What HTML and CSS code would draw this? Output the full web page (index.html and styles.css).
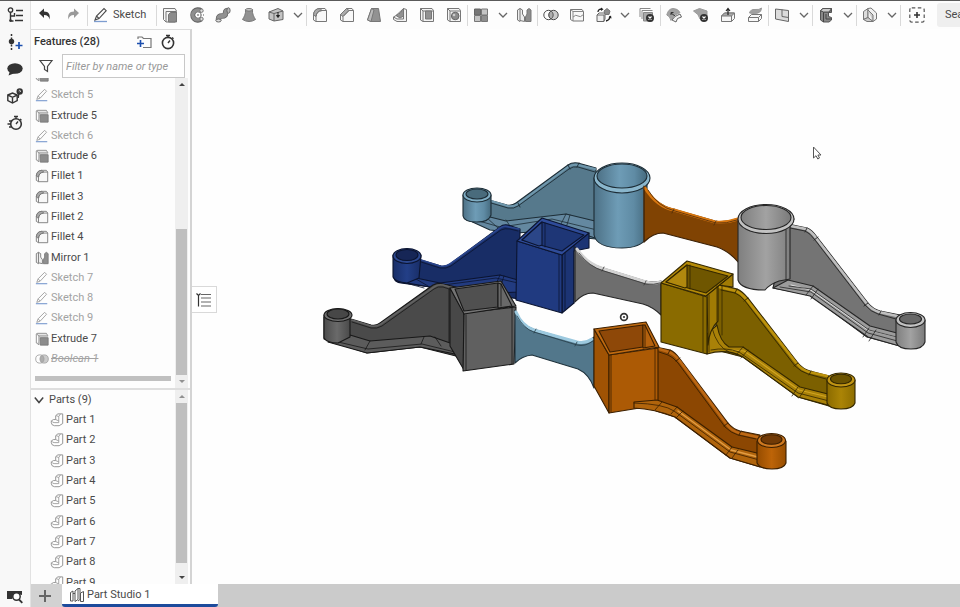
FILE: index.html
```html
<!DOCTYPE html>
<html lang="en">
<head>
<meta charset="utf-8">
<title>Part Studio 1</title>
<link rel="stylesheet" href="styles.css">
</head>
<body>
<svg class="defs" aria-hidden="true">
  <defs>
    <symbol id="i-sketch" viewBox="0 0 16 16"><path d="M1 14.500h13" stroke="#7d9dd0" stroke-width="1.300"/><path d="M2 13 3.500 9 11 1.500l2.200 2.200L6 11.500zM3.500 9 6 11.500" fill="none" stroke="currentColor" stroke-width="1.100"/></symbol>
    <symbol id="i-extrude" viewBox="0 0 16 16"><path d="M1.500 12.500V2.500l1-1H13L14.500 4v1M1.500 12.500 4.500 14.500V4.500L1.500 2M4.500 4.500h10" fill="#e6e6e6" stroke="#888"/><path d="M6 6.500h9v8.500H6z" fill="#8c8c8c" stroke="#777"/></symbol>
    <symbol id="i-extrude-big" viewBox="0 0 16 16"><path d="M1.500 12.500V1.500h11.500L14.500 4M1.500 12.500 4 15V4.500h10.500v10.500H4" fill="#f4f4f4" stroke="#777"/><path d="M6.500 7.500 8.500 5.500h6V13L13 15H6.500z" fill="#8c8c8c" stroke="#777"/></symbol>
    <symbol id="i-fillet" viewBox="0 0 16 16"><path d="M1.500 13V7.500Q2 2 7.500 1.500H13l1.500 2v11H4z" fill="#f8f8f8" stroke="#777"/><path d="M1.500 8Q2 1.500 8 1.500l2 2Q4.500 4 4 9.500z" fill="#aaa" stroke="#777"/><path d="M4 14.500V9.500Q4.500 4 10 3.500h4.500" fill="none" stroke="#777"/></symbol>
    <symbol id="i-mirror" viewBox="0 0 16 16"><path d="M1.500 3 4 1.500 6.500 3v4L8.500 10v4.500L4 13.500v1L1.500 13z" fill="#eee" stroke="#777"/><path d="M4 1.500v12" fill="none" stroke="#777"/><path d="M9.500 10 11 7V3l2-1.500 2 1.500v11.500H9.500z" fill="#8e8e8e" stroke="#777"/></symbol>
    <symbol id="i-boolean" viewBox="0 0 16 16"><circle cx="5.500" cy="8" r="4.700" fill="none" stroke="currentColor"/><circle cx="10.500" cy="8" r="4.700" fill="#aaa9" stroke="currentColor"/><path d="M8 4a4.800 4.800 0 0 1 0 8 4.800 4.800 0 0 1 0-8" fill="#9999" stroke="currentColor" stroke-width=".6"/></symbol>
    <symbol id="i-part" viewBox="0 0 16 16"><path d="M6.500 7.500V3L9 1h5.500v11L10.500 14.500H5Q1.500 14 1.500 11V9L4 7.500z" fill="#fff" stroke="#888"/><path d="M1.500 9q1 2 4 2H10V4l2-3M10 4 7 3M6.500 7.500 10 9" fill="none" stroke="#999"/></symbol>
    <symbol id="i-chev" viewBox="0 0 10 10"><path d="m1 3 4 4 4-4" fill="none" stroke="#666" stroke-width="1.300"/></symbol>
    <symbol id="i-watch" viewBox="0 0 16 16"><circle cx="8" cy="9" r="5.600" fill="none" stroke="#333" stroke-width="1.600"/><path d="M6 1.500h4M8 1.500V4M12 3.500l1.500 1.300M8 9l2-2.500" fill="none" stroke="#333" stroke-width="1.400"/></symbol>
  </defs>
</svg>

<div class="app">
  <nav class="rail" aria-label="Tools">
    <button type="button" aria-label="Feature list"><svg viewBox="0 0 16 16"><circle cx="3.500" cy="3" r="2.200" fill="none" stroke="#333" stroke-width="1.300"/><path d="M3.500 5v9h3M3.500 9h4V6M9 3.500h7M9 8.500h7M8 13.500h8" fill="none" stroke="#333" stroke-width="1.400"/><circle cx="3.500" cy="13.500" r="1.300" fill="#333"/></svg></button>
    <button type="button" aria-label="Insert"><svg viewBox="0 0 16 16"><path d="M4.500 0v16" stroke="#333" stroke-width="1.500" stroke-dasharray="2 1.500"/><circle cx="4.500" cy="7.500" r="2.700" fill="#333"/><path d="M8.500 11.500h7M12 8v7" stroke="#1c4fae" stroke-width="1.700"/></svg></button>
    <button type="button" aria-label="Comments"><svg viewBox="0 0 16 16"><ellipse cx="8" cy="7.500" rx="7.700" ry="5.300" fill="#333"/><path d="m3 10-1.500 4.500L8 12z" fill="#333"/></svg></button>
    <button type="button" aria-label="Configurations"><svg viewBox="0 0 16 16"><path d="M.8 7 5.500 5l4.700 2v5.500L5.500 15 .8 12.500zM.8 7l4.700 2.300L10.200 7M5.500 9.300V15" fill="none" stroke="#333" stroke-width="1.400"/><circle cx="12.700" cy="3.500" r="3.200" fill="#333"/><path d="M11.700 3q1-1.500 2 0l-1 1.200" fill="none" stroke="#fff" stroke-width=".8"/><path d="m11.800 6-.5 4" stroke="#333" stroke-width="1.300"/></svg></button>
    <button type="button" aria-label="Versions"><svg viewBox="0 0 16 16"><circle cx="9" cy="9" r="5.300" fill="none" stroke="#333" stroke-width="1.600"/><path d="M7 1.500h4M9 1.500V4M13 4l1.500 1.200M9 9l2-2.500M2 6h3M.5 9h3.500M2 12h2.500" fill="none" stroke="#333" stroke-width="1.300"/></svg></button>
    <button type="button" class="rail-end" aria-label="Find tab"><svg viewBox="0 0 16 16"><path d="M0 3h15v4L8 5.500 5 11H0z" fill="#333"/><circle cx="9.500" cy="8.500" r="3.700" fill="#fff" stroke="#333" stroke-width="1.500"/><path d="m12 11.500 3.300 3.300" stroke="#333" stroke-width="1.800"/></svg></button>
  </nav>

  <div class="workspace">
    <header class="toolbar">
      <div class="group g-history">
        <button type="button" aria-label="Undo"><svg viewBox="0 0 16 16"><path d="m2 6 5-4.500v3C12 4.500 13.500 8 12.500 12.500 12 9.500 10.500 8 7 8v3z" fill="#333"/></svg></button>
        <button type="button" aria-label="Redo"><svg viewBox="0 0 16 16"><path d="m14 6-5-4.500v3C4 4.500 2.500 8 3.500 12.500 4 9.500 5.500 8 9 8v3z" fill="#999"/></svg></button>
      </div>
      <div class="group g-sketch">
        <button type="button" class="sketch"><svg viewBox="0 0 16 16"><use href="#i-sketch"/></svg>Sketch</button>
      </div>
      <div class="group g-solid">
        <button type="button" aria-label="Extrude"><svg viewBox="0 0 16 16"><use href="#i-extrude-big"/></svg></button>
        <button type="button" aria-label="Revolve"><svg viewBox="0 0 16 16"><path d="M12 3.800A5.200 5.200 0 1 0 12 12.200" fill="none" stroke="#666" stroke-width="5"/><path d="M11.500 4.200A4.800 4.800 0 1 0 11.500 11.800" fill="none" stroke="#8e8e8e" stroke-width="3.400"/><path d="M8 8h7M11 5l1 2m-1 4 1-2" stroke="#555" stroke-dasharray="2 1"/><circle cx="12.500" cy="3.700" r="1.700" fill="#ddd" stroke="#777"/><circle cx="12.500" cy="12" r="1.700" fill="#ddd" stroke="#777"/></svg></button>
        <button type="button" aria-label="Sweep"><svg viewBox="0 0 16 16"><path d="M3.500 13.500V12Q3.500 9 7 9q3.500 0 3.500-3 0-2.500 3-2.500" fill="none" stroke="#666" stroke-width="5.500"/><path d="M3.500 13V12Q3.500 9 7 9q3.500 0 3.500-3 0-2.500 2.500-2.500" fill="none" stroke="#929292" stroke-width="4"/><ellipse cx="13.500" cy="3.500" rx="1.600" ry="2.700" fill="#bbb" stroke="#666"/><ellipse cx="3.500" cy="13.500" rx="2.600" ry="1.500" fill="#ddd" stroke="#666"/></svg></button>
        <button type="button" aria-label="Loft"><svg viewBox="0 0 16 16"><path d="M4.500 2.500C5 7 3 10 1.500 12.500q6.500 4 13 0C13 10 11 7 11.500 2.500z" fill="#929292" stroke="#777"/><ellipse cx="8" cy="2.800" rx="3.500" ry="1.300" fill="#ccc" stroke="#777"/></svg></button>
        <button type="button" aria-label="Thicken"><svg viewBox="0 0 16 16"><path d="m1 5 9-3.500 5 2.500v8.500L6 14l-5-2z" fill="#c4c4c4" stroke="#666"/><path d="m1 5 5 1.500L15 4M6 6.500V14" fill="none" stroke="#666"/><path d="M10 5v5M8.500 8.500l1.500 2 1.500-2z" stroke="#222" fill="#222"/></svg></button>
        <button type="button" class="chev" aria-label="More solid tools"><svg viewBox="0 0 10 10"><use href="#i-chev"/></svg></button>
      </div>
      <div class="group g-modify">
        <button type="button" aria-label="Fillet"><svg viewBox="0 0 16 16"><use href="#i-fillet"/></svg></button>
        <button type="button" aria-label="Chamfer"><svg viewBox="0 0 16 16"><path d="M1.500 13V7.500l6-6H13l1.500 2v11H4z" fill="#f8f8f8" stroke="#777"/><path d="m1.500 7.500 6-6 2.500 2L4 9.500z" fill="#aaa" stroke="#777"/><path d="M4 14.500v-5l6-6h4.500" fill="none" stroke="#777"/></svg></button>
        <button type="button" aria-label="Draft"><svg viewBox="0 0 16 16"><path d="m1.500 13 4-11.500h7l2 13H5z" fill="#929292" stroke="#777"/><path d="m1.500 13 4-11.500L8 3 5 14.500z" fill="#bbb" stroke="#777"/></svg></button>
        <button type="button" aria-label="Rib"><svg viewBox="0 0 16 16"><path d="M1.500 10 4 8.500 11.500 1.500l3 1v12H5l-3.500-2z" fill="#f2f2f2" stroke="#777"/><path d="M4 8.500q5-1.500 7.500-7V9L8 11z" fill="#929292" stroke="#777"/><path d="M1.500 10 5 12h6.500V2" fill="none" stroke="#777"/></svg></button>
        <button type="button" aria-label="Shell"><svg viewBox="0 0 16 16"><path d="M1.500 13V1.500H13l1.500 2v11H4z" fill="#f4f4f4" stroke="#777"/><path d="M4 14.500V4L1.500 1.500M4 4h10.500" fill="none" stroke="#777"/><path d="M6.500 4h6v8h-6z" fill="#929292" stroke="#777"/></svg></button>
        <button type="button" aria-label="Hole"><svg viewBox="0 0 16 16"><path d="M1.500 13V1.500H13l1.500 2v11H4z" fill="#f4f4f4" stroke="#777"/><path d="M4 14.500V4L1.500 1.500M4 4h10.500" fill="none" stroke="#777"/><circle cx="9.200" cy="9" r="3.800" fill="#8c8c8c" stroke="#666"/><circle cx="8" cy="8" r="1.300" fill="#ccc"/></svg></button>
      </div>
      <div class="group g-pattern">
        <button type="button" aria-label="Pattern"><svg viewBox="0 0 16 16"><path d="M1.500 2h6v6h-6z" fill="#777" stroke="#666"/><path d="M8.500 2h6v6h-6zM1.500 8.500h6v6h-6z" fill="#c4c4c4" stroke="#777"/><path d="M8.500 8.500h6v6h-6z" fill="#8e8e8e" stroke="#777"/></svg></button>
        <button type="button" class="chev" aria-label="More patterns"><svg viewBox="0 0 10 10"><use href="#i-chev"/></svg></button>
        <button type="button" aria-label="Mirror"><svg viewBox="0 0 16 16"><use href="#i-mirror"/></svg></button>
      </div>
      <div class="group g-combine">
        <button type="button" aria-label="Boolean"><svg viewBox="0 0 16 16"><use href="#i-boolean"/></svg></button>
        <button type="button" aria-label="Split"><svg viewBox="0 0 16 16"><path d="M1.500 12.500V2.500h11.500l1.500 2v9.500H4z" fill="#f8f8f8" stroke="#777"/><path d="M1.500 2.500 4 4.500h10.500M4 4.500V14M4 10q3-3 5-1t5.500-1.500" fill="none" stroke="#888"/></svg></button>
        <button type="button" aria-label="Transform"><svg viewBox="0 0 16 16"><path d="M1 8h7v6.500H1z" fill="#eee" stroke="#666"/><path d="M1 8 3 6h6v6l-1 2" fill="none" stroke="#666"/><path d="m8 4 3-2.500L14 4l-1 3.500H9z" fill="#8c8c8c" stroke="#777"/><path d="M2 5q0-3 4-3M14 9q0 4-4 5" fill="none" stroke="#222" stroke-width="1.300"/><path d="m5 .5 2.500 1.800L5 4zM12.500 10.500l2.500-2 .5 3z" fill="#222"/></svg></button>
        <button type="button" class="chev" aria-label="More transforms"><svg viewBox="0 0 10 10"><use href="#i-chev"/></svg></button>
        <button type="button" aria-label="Delete part"><svg viewBox="0 0 16 16"><path d="M1 10V1.500h10.500M3 12V3.500h10.500" fill="none" stroke="#888"/><path d="M4.500 5.500h9V14h-9z" fill="#aaa" stroke="#888"/><circle cx="11" cy="11" r="4" fill="#333"/><path d="m9.500 9.500 3 3m0-3-3 3" stroke="#fff" stroke-width="1.100"/></svg></button>
      </div>
      <div class="group g-face">
        <button type="button" aria-label="Modify fillet"><svg viewBox="0 0 16 16"><path d="M.8 8Q2 2 7 1.500q5 0 7 4L9 8l-4 5.500Q4 9 .8 8" fill="#a2a2a2" stroke="#999"/><path d="M6 13q2-4 8-6l1.500 3-4 1.500L10 15z" fill="#f2f2f2" stroke="#666"/><path d="m9 9-4-3M5 8V5.500h2.500" fill="none" stroke="#333"/></svg></button>
        <button type="button" aria-label="Delete face"><svg viewBox="0 0 16 16"><path d="m.5 4 6-2.500L14 4v5l-7 3q-1-5-6.500-8" fill="#a2a2a2" stroke="#999"/><circle cx="11" cy="11" r="4" fill="#333"/><path d="m9.500 9.500 3 3m0-3-3 3" stroke="#fff" stroke-width="1.100"/></svg></button>
        <button type="button" aria-label="Move face"><svg viewBox="0 0 16 16"><path d="m1.500 9 3-3h10v5.500l-3 3h-10z" fill="#f6f6f6" stroke="#777"/><path d="m1.500 9 3-3h10l-3 3z" fill="#aaa" stroke="#777"/><path d="M11.500 9v5.500" stroke="#777"/><path d="M8 8V2M6 4l2-2.500L10 4" fill="none" stroke="#222" stroke-width="1.200"/></svg></button>
        <button type="button" aria-label="Replace face"><svg viewBox="0 0 16 16"><path d="m1.500 10.500 3-3h10v4l-3 3h-10z" fill="#f8f8f8" stroke="#777"/><path d="M2.500 6q1-4 5.500-3.500T14.500 1q0 4-3.500 5t-8.500 0" fill="#a2a2a2" stroke="#999"/><path d="M1.500 10.500h10l3-3M11.500 10.500v4" fill="none" stroke="#777"/></svg></button>
      </div>
      <div class="group g-one">
        <button type="button" aria-label="Plane"><svg viewBox="0 0 16 16"><path d="m1.500 2 13 1.500v11L1.500 12z" fill="#dcdcdc" stroke="#666"/><path d="M8 2.500v7l6.500 1" fill="none" stroke="#666"/></svg></button>
        <button type="button" class="chev" aria-label="More planes"><svg viewBox="0 0 10 10"><use href="#i-chev"/></svg></button>
      </div>
      <div class="group g-one">
        <button type="button" aria-label="Frame"><svg viewBox="0 0 16 16"><path d="M2.500 3.500 5 1.500h8.500v4h-3v4l3 1v2.500L11 15H5.500l-3-2z" fill="#888" stroke="#555"/><path d="M2.500 3.500 5.500 5H11l2.500-2M5.500 5v10M8 7v5h5.500" fill="none" stroke="#444"/><path d="m2.500 3.500 2.500-2h8.500L11 5H5.500z" fill="#ccc" stroke="#555"/></svg></button>
        <button type="button" class="chev" aria-label="More frames"><svg viewBox="0 0 10 10"><use href="#i-chev"/></svg></button>
      </div>
      <div class="group g-one">
        <button type="button" aria-label="Sheet metal"><svg viewBox="0 0 16 16"><path d="M1.500 4.500 6 1.500v9l-4.500 2z" fill="#ddd" stroke="#777"/><path d="m6 1.500 3-.5 5.500 5v6L11 14.500 6 10.500z" fill="#f0f0f0" stroke="#777"/><path d="M1.500 12.500 6 10.500l5 4H5zM11 14.500V8L6 3" fill="#ccc" stroke="#777"/></svg></button>
        <button type="button" class="chev" aria-label="More sheet metal tools"><svg viewBox="0 0 10 10"><use href="#i-chev"/></svg></button>
      </div>
      <div class="group g-add">
        <button type="button" aria-label="Custom features"><svg viewBox="0 0 16 16"><rect x=".8" y=".8" width="14.400" height="14.400" rx="2" fill="none" stroke="#555" stroke-width="1.200" stroke-dasharray="3.500 2.500"/><path d="M8 5v6M5 8h6" stroke="#333" stroke-width="1.600"/></svg></button>
      </div>
      <button type="button" class="search">Search tools</button>
    </header>

    <main class="main">
      <aside class="panel">
        <div class="panel-head">
          <h2>Features (28)</h2>
          <button type="button" aria-label="Add folder"><svg viewBox="0 0 16 16"><path d="M2 5V3h4l1.500 1.500H15v9H7" fill="none" stroke="#777" stroke-width="1.200"/><path d="M1 9.500h7M4.500 6v7" stroke="#1c4fae" stroke-width="1.600"/></svg></button>
          <button type="button" aria-label="Rebuild times"><svg viewBox="0 0 16 16"><use href="#i-watch"/></svg></button>
        </div>
        <div class="filter">
          <svg viewBox="0 0 16 16" aria-hidden="true"><path d="M2 2.500h12L9.500 8.500v5l-3-2v-3z" fill="none" stroke="#444" stroke-width="1.200"/></svg>
          <input type="text" aria-label="Filter features" placeholder="Filter by name or type">
        </div>
        <section class="features">
          <div class="scroller">
            <ul class="feature-list">
              <li><svg><use href="#i-extrude"/></svg></li>
              <li class="muted"><svg><use href="#i-sketch"/></svg>Sketch 5</li>
              <li><svg><use href="#i-extrude"/></svg>Extrude 5</li>
              <li class="muted"><svg><use href="#i-sketch"/></svg>Sketch 6</li>
              <li><svg><use href="#i-extrude"/></svg>Extrude 6</li>
              <li><svg><use href="#i-fillet"/></svg>Fillet 1</li>
              <li><svg><use href="#i-fillet"/></svg>Fillet 3</li>
              <li><svg><use href="#i-fillet"/></svg>Fillet 2</li>
              <li><svg><use href="#i-fillet"/></svg>Fillet 4</li>
              <li><svg><use href="#i-mirror"/></svg>Mirror 1</li>
              <li class="muted"><svg><use href="#i-sketch"/></svg>Sketch 7</li>
              <li class="muted"><svg><use href="#i-sketch"/></svg>Sketch 8</li>
              <li class="muted"><svg><use href="#i-sketch"/></svg>Sketch 9</li>
              <li><svg><use href="#i-extrude"/></svg>Extrude 7</li>
              <li class="muted suppressed"><svg><use href="#i-boolean"/></svg><s>Boolean 1</s></li>
            </ul>
            <div class="rollback"></div>
          </div>
          <div class="track"><i class="up"></i><b class="thumb low"></b><i class="down faint"></i></div>
        </section>
        <section class="parts">
          <div class="scroller">
            <h3><svg viewBox="0 0 10 10"><path d="m.8 2.500 4.200 5 4.200-5" fill="none" stroke="#444" stroke-width="1.500"/></svg>Parts (9)</h3>
            <ul class="part-list">
              <li><svg><use href="#i-part"/></svg>Part 1</li>
              <li><svg><use href="#i-part"/></svg>Part 2</li>
              <li><svg><use href="#i-part"/></svg>Part 3</li>
              <li><svg><use href="#i-part"/></svg>Part 4</li>
              <li><svg><use href="#i-part"/></svg>Part 5</li>
              <li><svg><use href="#i-part"/></svg>Part 6</li>
              <li><svg><use href="#i-part"/></svg>Part 7</li>
              <li><svg><use href="#i-part"/></svg>Part 8</li>
              <li><svg><use href="#i-part"/></svg>Part 9</li>
            </ul>
          </div>
          <div class="track"><i class="up faint"></i><b class="thumb high"></b><i class="down"></i></div>
        </section>
      </aside>

      <div class="canvas">
        <button type="button" class="flyout" aria-label="Toggle list"><svg viewBox="0 0 16 16"><path d="M5 2.500h10M5 6h10M5 10h10M5 14h10" stroke="#666" stroke-width="1.200"/><path d="M2.500 3v11.500M.5 1.500l2 2 2-2" fill="none" stroke="#333" stroke-width="1.200"/></svg></button>
        <svg class="model" viewBox="192 29 768 555" role="img" aria-label="Mirrored brackets model">
          <defs>
            <linearGradient id="cy"><stop offset="0" stop-color="#4d7186"/><stop offset=".45" stop-color="#6e9cb6"/><stop offset=".75" stop-color="#5f8ba4"/><stop offset="1" stop-color="#456a7e"/></linearGradient>
            <linearGradient id="gr"><stop offset="0" stop-color="#7f7f7f"/><stop offset=".5" stop-color="#a2a2a2"/><stop offset="1" stop-color="#7a7a7a"/></linearGradient>
            <linearGradient id="bl"><stop offset="0" stop-color="#182e68"/><stop offset=".5" stop-color="#233f87"/><stop offset="1" stop-color="#182d66"/></linearGradient>
            <linearGradient id="dk"><stop offset="0" stop-color="#4c4c4c"/><stop offset=".5" stop-color="#6a6a6a"/><stop offset="1" stop-color="#4a4a4a"/></linearGradient>
            <linearGradient id="ye"><stop offset="0" stop-color="#8b6b00"/><stop offset=".5" stop-color="#ab8406"/><stop offset="1" stop-color="#8d6d00"/></linearGradient>
            <linearGradient id="or"><stop offset="0" stop-color="#954c00"/><stop offset=".5" stop-color="#bd6408"/><stop offset="1" stop-color="#984e00"/></linearGradient>
          </defs>
          <g stroke-linejoin="round" stroke-linecap="round" stroke-width="1.100">
            <!-- rear bracket, light blue arm -->
            <g stroke="#1d2d36">
              <path fill="#56798c" d="M464 197v20q2 4 10 5l26 8 96 9V168l-18-5q-6-1-10 2l-52 38q-4 3-9 2l-18-5z"/>
              <path fill="none" stroke="#6f97ac" stroke-width="2" d="m491 201 17 5q6 1 10-2l50-37q5-3 10-2l17 4"/>
              <path fill="none" stroke-width=".9" d="m491 203 17 5q6 1 10-2l51-37q4-3 9-2l17 5M579 163l-2 4m-9-2 2 4m-52 34 2 4"/>
              <path fill="#6488a0" d="m466 219 20-3 20 5 60-7 29 7v17l-12-4-20-5-45 4-28-3z"/>
              <path fill="none" stroke-width=".8" d="m486 217 12 11m8-8 6 9m54-15-6 12m10-11-4 13m-64-1 50-8 45 11m-125-11 28 8"/>
              <path fill="url(#cy)" d="M463 195v21q1 6 14 6 12 0 14-7v-20z"/>
              <ellipse cx="477" cy="195" rx="14" ry="7" fill="#7fadc4"/><ellipse cx="477" cy="194" rx="11" ry="5" fill="#496b7c"/>
              <path fill="url(#cy)" d="M594 178v57q3 13 28 13 18 0 25-10v-58z"/>
              <ellipse cx="622" cy="178" rx="28" ry="15" fill="#8ab6cc"/><ellipse cx="622" cy="176" rx="25" ry="12" fill="url(#cy)"/>
            </g>
            <!-- rear web -->
            <path fill="#804303" stroke="#3a2006" d="M644 186q12 19 29 23l42 12q12 2 24-3v45q-10-12-22-16l-54-14q-10 0-19 9z"/>
            <path fill="none" stroke="#d9770f" stroke-width="3" d="M645 188q12 19 29 22l41 12q12 1 23-3"/>
            <path fill="none" stroke="#4a2a0a" stroke-width=".8" d="M648 190q10 17 27 21l41 12q10 1 21-3M644 187v55M674 209l-2 4m44 8-2 4"/>
            <!-- rear grey end -->
            <g stroke="#262626">
              <path fill="#747474" d="m788 224 19 4q5 2 10 9l51 66q5 6 12 8l20 4v31l-33-9-57-42-37-7z"/>
              <path fill="none" stroke="#bfbfbf" stroke-width="2.500" d="m791 226 15 3q5 2 10 9l51 66q5 6 12 8l18 4"/>
              <path fill="none" stroke-width=".9" d="m790 228 15 3q5 2 10 9l50 65q6 7 13 9l18 5M807 228l-2 4m13 5-4 3m54 63-4 3m17 5-2 4"/>
              <path fill="#9c9c9c" d="m773 288 15-8 25 6 57 40 27 7 6 14-35-10-58-41z"/>
              <path fill="none" stroke="#ddd" d="m791 285 20 5 57 40 29 7"/>
              <path fill="none" stroke-width=".8" d="m780 287 31 5 57 41 33 9m-112-56 22 3 58 41 28 7M813 286l-7 9m12-6-7 10m58 29-6 9m13-7-7 11"/>
              <path fill="url(#gr)" d="M738 219v61q3 10 27 10 5-6 14-9l11-2V226l4-7z"/>
              <path fill="none" stroke-width=".9" d="M786 230v50"/>
              <ellipse cx="766" cy="219" rx="28" ry="14.500" fill="#c2c2c2"/><ellipse cx="766" cy="217.500" rx="25" ry="12" fill="url(#gr)"/>
              <path fill="url(#gr)" d="M896 320v22q2 7 15 7 12 0 14-7v-22z"/>
              <ellipse cx="910.500" cy="320" rx="14.500" ry="7.500" fill="#c2c2c2"/><ellipse cx="910.500" cy="319" rx="11" ry="5" fill="#686868"/>
            </g>
            <!-- middle bracket, dark blue -->
            <g stroke="#0b1430">
              <path fill="#182d66" d="M394 258v20q1 4 7 5l29 4 90 12v-70l-12-4q-5-1-8 2l-50 37q-4 3-9 2l-20-6z"/>
              <path fill="none" stroke="#2b468e" stroke-width="1.600" d="m421 260 19 6q6 1 10-2l50-36q4-3 9-1l10 2"/>
              <path fill="none" stroke-width=".8" d="m421 262 19 6q6 1 11-2l50-36q4-2 9-1l8 2"/>
              <path fill="#223b80" d="m396 281 20-3 24 5 60-8 18 5v12l-20 1-68-6z"/>
              <path fill="none" stroke-width=".8" d="m416 279 12 7m12-3 8 5m52-13-4 9m8-8-3 9m-65 1 60-8 22 5m-116-1 22 6"/>
              <path fill="url(#bl)" d="M393 255v22q2 5 14 6l12-5 2-23z"/>
              <ellipse cx="407" cy="256" rx="14" ry="7.500" fill="#2c488f"/><ellipse cx="407" cy="255" rx="11" ry="5.500" fill="#162656"/>
              <path fill="#1c3474" d="m562 254 27-21v15l-15 3v52l-12 10z"/>
              <path fill="#203a80" d="m517 241 45 14v58l-46-13z"/>
              <path fill="#2f4c9a" d="m517 241 25-23 47 15-27 22z"/>
              <path fill="#1e3676" d="m522 240 20-18 42 13-22 16z"/><path fill="#2b4688" d="m522 240 20-18v23l-3 1z"/>
              <path fill="none" stroke-width=".8" d="M559 255v56m6-58v57m9-64v57M545 223v24"/>
            </g>
            <path fill="#6e6e6e" stroke="#262626" d="M575 247q12 17 28 21l42 13q10 2 16 0v34q-8-8-18-11l-50-11q-10 0-18 9z"/>
            <path fill="none" stroke="#d2d2d2" stroke-width="3" d="M577 249q10 15 27 20l42 13q8 2 14 0"/>
            <path fill="none" stroke="#333" stroke-width=".8" d="M579 253q10 14 25 18l42 13q8 1 14-1M604 267l-2 4m44 10-2 4"/>
            <!-- middle yellow end -->
            <g stroke="#332700">
              <path fill="#7c6000" d="M716 285h6l15 4q5 2 11 9l50 65q5 6 12 8l19 5v30l-31-9-55-40-27-7z"/>
              <path fill="none" stroke="#bd920c" stroke-width="2.600" d="m719 287 17 4q5 2 11 9l50 64q5 6 12 8l18 4"/>
              <path fill="none" stroke-width=".9" d="m721 290 14 3q5 2 10 8l50 65q6 6 13 8l18 5M737 289l-2 4m13 5-4 3m54 62-4 3m17 5-2 4"/>
              <path fill="#a98108" d="M707 354v-20l10-9q3 17 12 22l14 0 57 40 28 7 7 13-37-10-55-40q-16-9-36-3z"/>
              <path fill="none" stroke="#d0a422" d="m732 350 12 1 55 39 29 7"/>
              <path fill="none" stroke-width=".8" d="M711 350q15-3 28 2l59 41 35 9M743 347l-7 8m12-5-7 8m57 29-6 9m13-7-6 9M712 328q5 19 17 24"/>
              <path fill="#a17b04" d="m707 295 26-21v13l-15-2v36q-9 9-10 24z"/>
              <path fill="#8a6b00" d="m661 283 46 14v57l-46-12z"/>
              <path fill="#b58b08" d="m661 283 26-22 46 13-27 22z"/>
              <path fill="#6f5600" d="m666 282 21-17 41 11-22 17z"/><path fill="#b0880e" d="m666 282 21-17v22l-2 1z"/>
              <path fill="none" stroke-width=".8" d="M703 296v56m6-57v57m8-66v35m5-36v50M690 265v24"/>
              <path fill="url(#ye)" d="M827 380v23q2 6 14 6t14-6v-23z"/>
              <ellipse cx="841" cy="380" rx="14" ry="7" fill="#c09414"/><ellipse cx="841" cy="379" rx="10.500" ry="4.800" fill="#6b5300"/>
            </g>
            <!-- front bracket, dark grey -->
            <g stroke="#181818">
              <path fill="#4a4a4a" d="M324 317v22l43 14 53-6 36 9v-69l-13-3q-6-1-10 1l-53 38q-3 3-9 2l-20-6z"/>
              <path fill="none" stroke="#626262" stroke-width="1.600" d="m352 320 19 6q6 1 10-2l53-37q4-3 9-2l10 3"/>
              <path fill="none" stroke-width=".8" d="m352 322 19 6q6 1 11-2l52-37q4-3 9-2l9 3M449 289v53"/>
              <path fill="#5c5c5c" d="m328 342 22-7 20 6 60-5 23 8 2 10-35-7-53 6z"/>
              <path fill="none" stroke-width=".8" d="m334 341 34 8 54-5 33 8m-85-11-5 9m59-13-3 7m14-7 6 9"/>
              <path fill="url(#dk)" d="M324 315v23q3 5 14 5l12-6V315z"/>
              <ellipse cx="338" cy="315" rx="14" ry="6.500" fill="#707070"/><ellipse cx="338" cy="314" rx="11" ry="5" fill="#474747"/>
              <path fill="#484848" d="m450 288 14 25v57l-14-24z"/>
              <path fill="#606060" d="m464 313 52-6-2 57-51 7z"/>
              <path fill="#747474" d="m450 288 51-7 15 25-52 8z"/>
              <path fill="#505050" d="m455 289 43-6v24l-34 4z"/><path fill="#696969" d="m498 283 3 1 11 22-14 2z"/>
              <path fill="none" stroke-width=".8" d="M466 315v55m46-62v56M501 284v22"/>
            </g>
            <path fill="#52778b" stroke="#1f323c" d="M515 310q6 15 18 19l44 13q10 2 17-5v51q-5-14-16-19l-46-14q-10 1-17 8z"/>
            <path fill="none" stroke="#9cc9df" stroke-width="3" d="M516 312q6 14 18 18l43 12q8 2 15-3"/>
            <path fill="none" stroke="#263c47" stroke-width=".8" d="M517 316q7 13 17 16l43 13q8 2 16-4M536 329l-2 4m43 9-2 4"/>
            <!-- front orange end -->
            <g stroke="#3b1f00">
              <path fill="#8c4702" d="m656 347 14 3q5 2 10 9l48 64q5 6 12 8l20 4v32l-30-9-55-41-19-6z"/>
              <path fill="none" stroke="#bd6814" stroke-width="2.600" d="m659 349 10 3q5 2 10 8l48 65q5 6 12 8l18 4"/>
              <path fill="none" stroke-width=".9" d="m659 352 9 3q5 2 10 8l47 64q6 6 13 8l18 4M670 350l-2 4m12 4-4 3m52 62-4 3m17 5-2 4"/>
              <path fill="#a05304" d="m594 329 15 26v58l-15-27z"/>
              <path fill="#ac5a05" d="m609 355 49-7v57l-49 8z"/>
              <path fill="#c06a10" d="m594 329 52-7 13 25-50 8z"/>
              <path fill="#8e4808" d="m599 331 44-6v22l-33 5z"/><path fill="#b5620e" d="M643 325h2l10 21-12 2z"/>
              <path fill="none" stroke-width=".8" d="M611 355v57m44-63v53M645 325v22"/>
              <path fill="#b0640c" d="m634 402 23-2 20 7 55 40 25 6 7 15-34-10-55-41q-20-8-41-9z"/>
              <path fill="none" stroke="#e29d44" stroke-width="1.400" d="m678 411 53 39 27 7"/>
              <path fill="none" stroke-width=".8" d="M634 403q30 1 40 8l56 41 33 9M662 402l-7 8m22-3-6 7m12-3-7 7m56 29-6 8m12-5-6 8"/>
              <path fill="url(#or)" d="M757 441v22q3 6 15 6 12 0 14-6v-22z"/>
              <ellipse cx="771.500" cy="440.500" rx="14" ry="7" fill="#cd7820"/><ellipse cx="771.500" cy="439.500" rx="10.500" ry="4.800" fill="#713a06"/>
            </g>
          </g>
          <circle cx="624" cy="317" r="3.400" fill="#fff" stroke="#333" stroke-width="1.700"/><circle cx="624" cy="317" r="1.100" fill="#333"/>
          <path d="M813.500 147v11l2.500-2.300 1.800 3.300 1.700-1-1.600-3h3.100z" fill="#fff" stroke="#555"/>
        </svg>
      </div>
    </main>

    <footer class="tabs">
      <button type="button" class="add" aria-label="Add tab"><svg viewBox="0 0 16 16"><path d="M8 2v12M2 8h12" stroke="#666" stroke-width="2"/></svg></button>
      <a class="tab" href="#"><svg viewBox="0 0 16 16"><path d="M1.500 5.500 4 4v10H1.500zM6 4l3-2.500v11L6 14.500zM9 1.500h2v11L9 14M11.500 6l3-1.500v10h-3z" fill="#fff" stroke="#555"/><path d="M4 6.500h2" stroke="#555"/></svg>Part Studio 1</a>
    </footer>
  </div>
</div>
</body>
</html>
```
FILE: styles.css
```css
* { box-sizing: border-box; }

body {
  margin: 0;
  font: 11px/16px Roboto, "Liberation Sans", sans-serif;
  color: #4a4a4a;
  background: #fefefe;
}

h2, h3, ul { margin: 0; padding: 0; font-size: 11px; }
ul { list-style: none; }

button {
  border: 0;
  padding: 0;
  background: none;
  font: inherit;
  color: inherit;
  display: flex;
  align-items: center;
  justify-content: center;
}

svg { flex: none; width: 16px; height: 16px; }
.defs { display: none; }

.app {
  display: flex;
  height: 100vh;
  border-top: 1px solid #5a5a5a;
  overflow: hidden;
}

.rail {
  width: 31px;
  flex: none;
  display: flex;
  flex-direction: column;
  background: #f8f8f8;
  border-right: 1px solid #e2e2e2;
}
.rail button { height: 27px; }
.rail .rail-end { margin-top: auto; height: 23px; }

.workspace {
  flex: 1;
  min-width: 0;
  display: flex;
  flex-direction: column;
}

.toolbar {
  display: flex;
  align-items: center;
  height: 28px;
  flex: none;
  overflow: hidden;
  background: #fdfdfd;
}
.group {
  display: flex;
  flex: none;
  height: 21px;
  border-left: 1px solid #d9d9d9;
}
.group button { flex: 1; }
.group .chev { flex: none; width: 17px; }
.chev svg { width: 10px; height: 10px; }
.g-history { width: 56px; border-left: 0; }
.g-sketch { width: 69px; }
.g-solid { width: 150px; }
.g-modify { width: 161px; }
.g-pattern { width: 70px; }
.g-combine { width: 123px; }
.g-face { width: 108px; }
.g-one { width: 44px; }
.g-add { width: 32px; }
.group .sketch { justify-content: flex-start; gap: 4px; padding-left: 5px; }
.search {
  flex: none;
  height: 24px;
  margin-left: 5px;
  padding: 0 8px;
  border-radius: 3px;
  background: #efefef;
}

.main { flex: 1; min-height: 0; display: flex; }

.panel {
  width: 161px;
  flex: none;
  display: flex;
  flex-direction: column;
  border-top: 1px solid #dcdcdc;
  border-right: 2px solid #d4d4d4;
  background: #fdfdfd;
}
.panel-head {
  display: flex;
  align-items: center;
  gap: 8px;
  height: 24px;
  padding: 0 14px 0 3px;
}
.panel-head h2 { flex: 1; font-weight: 500; color: #333; }

.filter { display: flex; align-items: center; gap: 8px; padding: 0 5px 0 7px; }
.filter input {
  flex: 1;
  min-width: 0;
  height: 24px;
  padding: 0 3px;
  border: 1px solid #c8c8c8;
  background: #fff;
  font: italic 11px Roboto, "Liberation Sans", sans-serif;
  color: #444;
}
.filter input::placeholder { color: #999; opacity: 1; }

.features, .parts { display: flex; }
.features { flex: 1; min-height: 0; border-bottom: 2px solid #dedede; }
.parts { height: 194px; flex: none; }
.scroller {
  flex: 1;
  min-width: 0;
  display: flex;
  flex-direction: column;
  overflow: hidden;
}
.features .scroller { justify-content: flex-end; }

.feature-list, .part-list { display: grid; grid-auto-rows: 1fr; flex: none; }
.feature-list { height: 304px; }
.part-list { height: 183px; }
li { display: flex; align-items: center; }
li svg { width: 14px; height: 14px; }
.feature-list li { gap: 2px; padding-left: 4px; }
.feature-list .muted { color: #a3a3a3; }
.suppressed { font-style: italic; }
.part-list li { gap: 2px; padding-left: 19px; }

.rollback { flex: none; height: 5px; margin: 7px 4px; background: #c0c0c0; }

.parts h3 {
  display: flex;
  align-items: center;
  gap: 5px;
  flex: none;
  height: 20px;
  padding-left: 3px;
  font-weight: 400;
}
.parts h3 svg { width: 10px; height: 10px; }

.track {
  width: 13px;
  flex: none;
  margin-right: 2px;
  display: flex;
  flex-direction: column;
  align-items: center;
  background: #efefef;
}
.track i { flex: none; height: 13px; display: flex; align-items: center; }
.track i::before { content: ""; border: 3px solid transparent; }
.track .up::before { margin-bottom: 3px; border-bottom-color: #444; }
.track .down::before { margin-top: 3px; border-top-color: #444; }
.faint { opacity: .55; }
.thumb { width: 11px; background: #bfbfbf; }
.low { margin-top: auto; flex: 0 1 47%; }
.high { flex: 1; margin-bottom: 8px; }

.canvas { flex: 1; min-width: 0; position: relative; }
.model { display: block; width: 100%; height: 100%; }
.flyout {
  position: absolute;
  left: 0;
  top: 257px;
  width: 25px;
  height: 27px;
  border: 1px solid #d9d9d9;
  border-left: 0;
  background: #fff;
}

.tabs { display: flex; flex: none; height: 23px; background: #cbcbcb; }
.add { width: 31px; padding-right: 4px; background: #d2d2d2; }
.tab {
  display: flex;
  align-items: center;
  gap: 2px;
  width: 156px;
  padding: 1px 0 0 7px;
  border-bottom: 3px solid #1d4b9c;
  border-radius: 0 0 3px 3px;
  background: #fff;
  color: #4a4a4a;
  text-decoration: none;
}
```
